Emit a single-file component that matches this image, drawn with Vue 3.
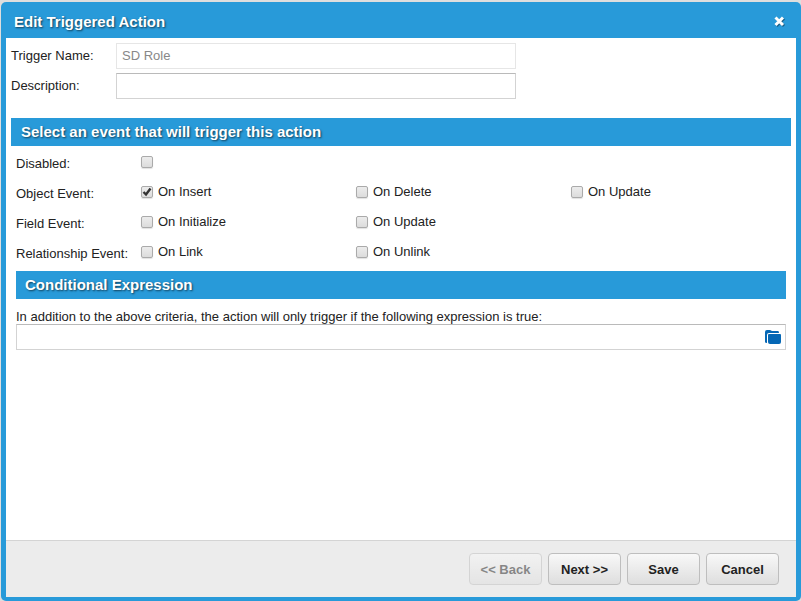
<script setup>
import { reactive, ref } from 'vue'

const triggerName = ref('SD Role')
const description = ref('')
const expression = ref('')
const disabled = ref(false)

const groups = reactive([
  {
    label: 'Object Event:',
    options: [
      { id: 'object-insert', label: 'On Insert', checked: true },
      { id: 'object-delete', label: 'On Delete', checked: false },
      { id: 'object-update', label: 'On Update', checked: false },
    ],
  },
  {
    label: 'Field Event:',
    options: [
      { id: 'field-initialize', label: 'On Initialize', checked: false },
      { id: 'field-update', label: 'On Update', checked: false },
    ],
  },
  {
    label: 'Relationship Event:',
    options: [
      { id: 'relationship-link', label: 'On Link', checked: false },
      { id: 'relationship-unlink', label: 'On Unlink', checked: false },
    ],
  },
])
</script>

<template>
  <div class="page">
    <form class="dialog" @submit.prevent>
      <header class="titlebar">
        <h1>Edit Triggered Action</h1>
        <button type="button" class="close" aria-label="Close">
          <svg width="12" height="12" viewBox="0 0 12 12">
            <path class="shade" d="M2.5 2.5l7.5 7.5M10 2.5l-7.5 7.5" />
            <path class="mark" d="M1.5 1.5l7.5 7.5M9 1.5l-7.5 7.5" />
          </svg>
        </button>
      </header>

      <main class="content">
        <div class="fields">
          <div class="field">
            <label for="trigger-name">Trigger Name:</label>
            <input id="trigger-name" v-model="triggerName" class="text" type="text" disabled />
          </div>
          <div class="field">
            <label for="description">Description:</label>
            <input id="description" v-model="description" class="text" type="text" />
          </div>
        </div>

        <h2 class="bar">Select an event that will trigger this action</h2>

        <section class="events">
          <div class="row">
            <label class="row-label" for="disabled">Disabled:</label>
            <span class="option">
              <input id="disabled" v-model="disabled" type="checkbox" />
            </span>
          </div>
          <div v-for="group in groups" :key="group.label" class="row">
            <span class="row-label">{{ group.label }}</span>
            <label v-for="option in group.options" :key="option.id" class="option" :for="option.id">
              <input :id="option.id" v-model="option.checked" type="checkbox" />
              <span>{{ option.label }}</span>
            </label>
          </div>

          <h2 class="bar sub">Conditional Expression</h2>
          <label class="hint" for="expression">In addition to the above criteria, the action will only trigger if the following expression is true:</label>
          <div class="expression">
            <input id="expression" v-model="expression" type="text" />
            <button type="button" class="browse" aria-label="Browse">
              <svg width="16" height="14" viewBox="0 0 16 14">
                <path d="M0 12V2Q0 0 2 0h3l2 1h6q1 0 1 2H4Q2 3 2 5v8Q0 13 0 12z" />
                <path d="M3 5q0-1 1-1h11q1 0 1 1v7q0 2-2 2H5q-2 0-2-2z" />
              </svg>
            </button>
          </div>
        </section>
      </main>

      <footer class="footer">
        <button type="button" disabled>&lt;&lt; Back</button>
        <button type="button">Next &gt;&gt;</button>
        <button type="submit">Save</button>
        <button type="button">Cancel</button>
      </footer>
    </form>
  </div>
</template>

<style>
body {
  background: #dedede;
}
</style>

<style scoped>
.page {
  box-sizing: border-box;
  min-height: 100vh;
  display: flex;
  padding: 2px 0 0 1px;
  font: 13px/16px Arial, "Liberation Sans", sans-serif;
  color: #222;
}

.dialog {
  flex: 1;
  display: flex;
  flex-direction: column;
  min-width: 0;
  background: #fff;
  border: solid #289ad9;
  border-width: 0 5px 4px;
  border-radius: 5px;
}

.titlebar {
  box-sizing: border-box;
  display: flex;
  align-items: center;
  justify-content: space-between;
  height: 36px;
  padding: 3px 10px 0 8px;
  background: #289ad9;
}

h1,
h2 {
  margin: 0;
  color: #fff;
  font-size: 15px;
  font-weight: bold;
  text-shadow: 1px 1px 2px rgba(0, 0, 0, 0.6);
}

h1 {
  line-height: 18px;
}

.close {
  display: flex;
  padding: 0;
  border: 0;
  background: none;
}

.close path {
  fill: none;
  stroke-width: 3;
}

.close .shade {
  stroke: #1c6088;
}

.close .mark {
  stroke: #fff;
}

.content {
  flex: 1;
  padding: 5px;
}

.fields {
  display: grid;
  gap: 4px;
  margin-bottom: 19px;
}

.field {
  display: flex;
}

.field label {
  width: 105px;
  line-height: 26px;
}

.text {
  box-sizing: border-box;
  width: 400px;
  height: 26px;
  padding: 0 5px 2px;
  border: 1px solid #d3d3d3;
  border-top-color: #bababa;
  background: #fff;
  font: inherit;
}

.text:disabled {
  border-color: #e6e6e6;
  color: #888;
}

.bar {
  height: 28px;
  padding-left: 10px;
  line-height: 28px;
  background: #289ad9;
}

.events {
  padding: 2px 5px 0;
}

.row {
  display: grid;
  grid-template-columns: 125px 215px 215px 1fr;
  height: 30px;
}

.row-label {
  line-height: 32px;
  white-space: nowrap;
}

.option {
  display: flex;
  align-items: center;
  gap: 5px;
  height: 28px;
}

.option input {
  appearance: none;
  box-sizing: border-box;
  width: 12px;
  height: 12px;
  margin: 0;
  border: 1px solid #aaa;
  border-radius: 2px;
  background: linear-gradient(#ececec, #dcdcdc);
  box-shadow: 0 1px 1px rgba(0, 0, 0, 0.12);
}

.option input:checked {
  background:
    url("data:image/svg+xml,%3Csvg xmlns='http://www.w3.org/2000/svg' viewBox='0 0 10 10'%3E%3Cpath d='M1.5 5L4 7.5L8.5 1.5' fill='none' stroke='%23333' stroke-width='2.4'/%3E%3C/svg%3E"),
    linear-gradient(#ececec, #dcdcdc);
}

.sub {
  margin-top: 3px;
  padding-left: 9px;
}

.hint {
  display: block;
  padding-top: 10px;
  line-height: 15px;
}

.expression {
  display: flex;
  height: 24px;
  border: 1px solid #d3d3d3;
  border-top-color: #bababa;
}

.expression input {
  flex: 1;
  min-width: 0;
  padding: 0 5px;
  border: 0;
  background: none;
  font: inherit;
}

.browse {
  display: flex;
  align-items: center;
  padding: 0 4px;
  border: 0;
  background: none;
}

.browse path {
  fill: #0567b5;
}

.footer {
  display: flex;
  justify-content: flex-end;
  gap: 6px;
  padding: 12px 17px;
  border-top: 1px solid #d4d4d4;
  background: #ececec;
}

.footer button {
  width: 73px;
  height: 32px;
  padding: 2px 0 0;
  border: 1px solid #bebebe;
  border-radius: 4px;
  background: linear-gradient(#f8f8f8, #dedede);
  color: #222;
  font: bold 13px/16px Arial, "Liberation Sans", sans-serif;
}

.footer button:disabled {
  opacity: 0.5;
}
</style>
